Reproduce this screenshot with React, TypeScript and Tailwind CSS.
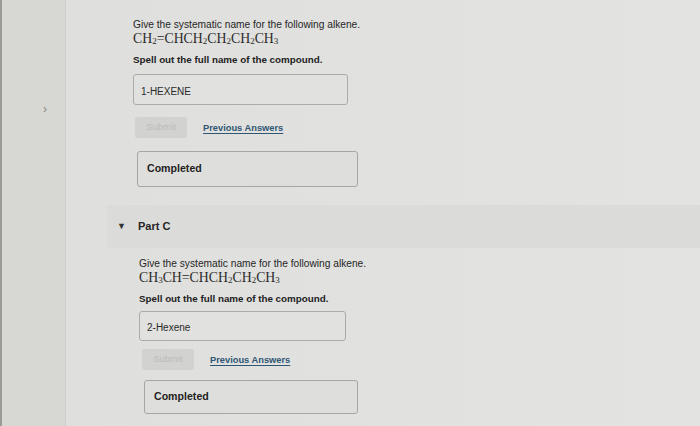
import React from 'react';

const sans = { fontFamily: '"Liberation Sans", Arial, sans-serif' };

function Formula({ parts }: { parts: (string | [string])[] }) {
  // plain strings are atoms, single-item arrays are subscripts
  return (
    <div className="text-[13.8px] leading-[14px] text-[#2b2b2b] font-['Liberation_Serif',serif] whitespace-nowrap">
      {parts.map((p, i) =>
        typeof p === 'string' ? (
          <span key={i}>{p}</span>
        ) : (
          <sub key={i} className="text-[9px] relative top-[1px]">{p[0]}</sub>
        )
      )}
    </div>
  );
}

type QuestionProps = {
  formula: (string | [string])[];
  answer: string;
  inputCls: string;
  rowCls: string;
  doneCls: string;
  shift: number;
};

function Question({ formula, answer, inputCls, rowCls, doneCls, shift }: QuestionProps) {
  return (
    <div className="flex flex-col items-start">
      <div className="text-[10.2px] leading-[14px] text-[#262626]">Give the systematic name for the following alkene.</div>
      <Formula parts={formula} />
      <div className="mt-[7px] text-[9.8px] leading-[14px] font-bold text-[#222]">Spell out the full name of the compound.</div>
      <div className={`${inputCls} rounded-[3px] border border-[#ababa9] bg-[#e1e1df] flex items-center pt-[3px] px-[7px] text-[10px] text-[#2a2a2a]`}>
        {answer}
      </div>
      <div className={`${rowCls} flex items-center`} style={{ marginLeft: shift }}>
        <div className="w-[52px] h-[21px] rounded-[2px] bg-[#d2d2d0] flex items-center justify-center text-[9.5px] text-[#bcbcba]">Submit</div>
        <div className="ml-[16px] mt-[3px] text-[9.3px] font-bold text-[#2f5673] underline underline-offset-2">Previous Answers</div>
      </div>
      <div
        className={`${doneCls} rounded-[3px] border border-[#a6a6a4] bg-[#dededc] flex items-center px-[9px] text-[10.6px] font-bold text-[#1f1f1f]`}
        style={{ marginLeft: shift + 2 }}
      >
        Completed
      </div>
    </div>
  );
}

export default function App() {
  return (
    <div className="w-[700px] h-[426px] overflow-hidden flex bg-[#e0e0de]" style={sans}>
      {/* collapsed side rail */}
      <div className="w-[66px] h-full shrink-0 bg-[#d7d7d4] border-l-2 border-[#9a9a96] border-r border-r-[#cdcdca] flex flex-col items-end pr-[18px] pt-[100px]">
        <span className="text-[12px] text-[#888]">›</span>
      </div>

      <div className="flex-1 flex flex-col bg-gradient-to-r from-[#dfdfdd] to-[#e3e3e1]">
        <div className="pl-[67px] pt-[18px]">
          <Question
            formula={['CH', ['2'], '=CHCH', ['2'], 'CH', ['2'], 'CH', ['2'], 'CH', ['3']]}
            answer="1-HEXENE"
            inputCls="mt-[7px] w-[215px] h-[31px]"
            rowCls="mt-[12px]"
            doneCls="mt-[13px] w-[221px] h-[36px]"
            shift={2}
          />
        </div>

        {/* Part C header */}
        <div className="mt-[18px] ml-[41px] h-[43px] bg-[#dbdbd9] flex items-center pl-[10px]">
          <span className="text-[9px] text-[#333] leading-none">▼</span>
          <span className="ml-[12px] text-[11px] font-bold text-[#262626]">Part C</span>
        </div>

        <div className="pl-[73px] pt-[9px]">
          <Question
            formula={['CH', ['3'], 'CH=CHCH', ['2'], 'CH', ['2'], 'CH', ['3']]}
            answer="2-Hexene"
            inputCls="mt-[5px] w-[207px] h-[30px]"
            rowCls="mt-[8px]"
            doneCls="mt-[10px] w-[214px] h-[34px]"
            shift={3}
          />
        </div>
      </div>
    </div>
  );
}
